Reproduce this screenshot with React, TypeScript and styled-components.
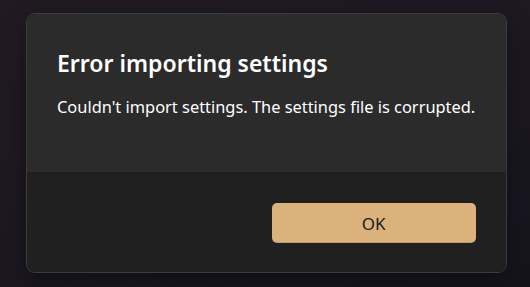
import React from "react";
import styled, { createGlobalStyle } from "styled-components";

const Global = createGlobalStyle`
  html, body { margin: 0; padding: 0; }
  body {
    width: 530px;
    height: 287px;
    overflow: hidden;
    background: linear-gradient(160deg, #221a22 0%, #1c1822 50%, #15141d 100%);
    font-family: "Noto Sans", "Open Sans", sans-serif;
  }
`;

const Stage = styled.div`
  width: 530px;
  height: 287px;
  box-sizing: border-box;
  padding: 13px 23px 0 26px;
`;

const Dialog = styled.div`
  width: 481px;
  height: 260px;
  box-sizing: border-box;
  border: 1px solid #3c3c3c;
  border-radius: 9px;
  overflow: hidden;
  display: flex;
  flex-direction: column;
  box-shadow: 0 8px 24px rgba(0, 0, 0, 0.35);
`;

const Content = styled.div`
  background: #2b2b2b;
  height: 158px;
  box-sizing: border-box;
  padding: 32px 30px 0 30px;
  display: flex;
  flex-direction: column;
`;

const Title = styled.h1`
  margin: 0;
  font-size: 23px;
  font-weight: 600;
  color: #ffffff;
  line-height: 34px;
`;

const Body = styled.p`
  margin: 15px 0 0 0;
  font-size: 16.4px;
  font-weight: 400;
  color: #ffffff;
  line-height: 24px;
`;

const Footer = styled.div`
  flex: 1;
  background: #202020;
  border-top: 1px solid #1d1d1d;
  box-sizing: border-box;
  padding: 30px 30px 0 30px;
  display: grid;
  grid-template-columns: 1fr 1fr;
  column-gap: 10px;
`;

const PrimaryButton = styled.button`
  grid-column: 2;
  height: 40px;
  border: none;
  border-radius: 5px;
  background: #dbb27c;
  color: #1a1a1a;
  font-family: "Noto Sans", "Open Sans", sans-serif;
  font-size: 17px;
  font-weight: 400;
  cursor: pointer;
  box-shadow: inset 0 -1px 0 rgba(0, 0, 0, 0.12);
`;

export default function App() {
  return (
    <>
      <Global />
      <Stage>
        <Dialog>
          <Content>
            <Title>Error importing settings</Title>
            <Body>Couldn't import settings. The settings file is corrupted.</Body>
          </Content>
          <Footer>
            <PrimaryButton>OK</PrimaryButton>
          </Footer>
        </Dialog>
      </Stage>
    </>
  );
}
